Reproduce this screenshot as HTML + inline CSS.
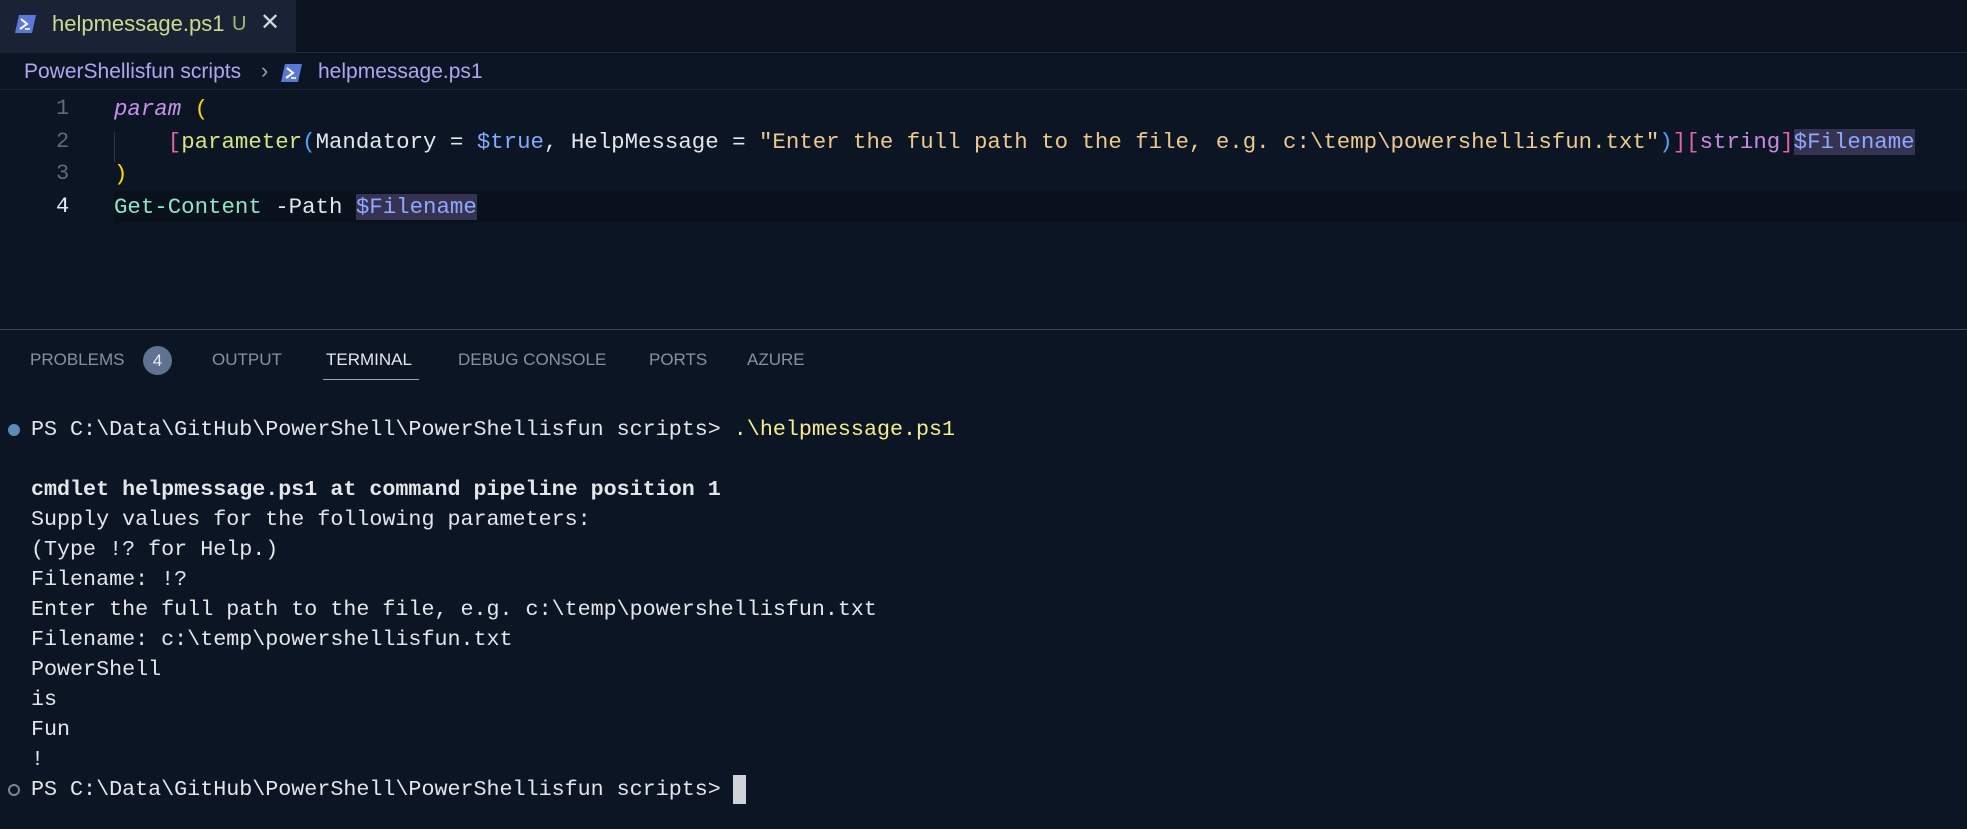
<!DOCTYPE html>
<html><head><meta charset="utf-8"><style>
*{margin:0;padding:0;box-sizing:border-box}
body{width:1967px;height:829px;background:#0c1524;overflow:hidden;position:relative;font-family:"Liberation Sans",sans-serif}
.abs{position:absolute;white-space:pre}
.tabbar{position:absolute;left:0;top:0;width:1967px;height:53px;background:#0c1421;border-bottom:1px solid #1f2a3b}
.tab{position:absolute;left:0;top:0;width:296px;height:53px;background:#1a2335}
.mono{font-family:"Liberation Mono",monospace}
.code{font-size:22.4px;line-height:32px}
.term{font-size:21.7px;line-height:30px;color:#e4e6ea}
.ln{color:#5d6b80;font-size:22px;line-height:32px;font-family:"Liberation Mono",monospace}
.sel{background:#363352}
</style></head><body>
<div class="tabbar"></div>
<div class="tab"></div>
<svg class="abs" style="left:15px;top:14px" width="22" height="20" viewBox="0 0 22 20"><path d="M4 1h17l-4 18H0z" fill="#5a78d8"/><path d="M6 5l6 5-7 5" stroke="#fff" stroke-width="2" fill="none"/><path d="M10 15h5" stroke="#fff" stroke-width="1.6"/></svg>
<div class="abs" style="left:52px;top:11px;font-size:22px;color:#cbdc8e">helpmessage.ps1</div>
<div class="abs" style="left:232px;top:13px;font-size:20px;color:#a9b774">U</div>
<div class="abs" style="left:260px;top:8px;font-size:24px;color:#d0d4dc">✕</div>
<div class="abs" style="left:24px;top:60px;font-size:21px;color:#b2a4f4">PowerShellisfun scripts</div>
<div class="abs" style="left:261px;top:58px;font-size:22px;color:#9aa3b5">›</div>
<svg class="abs" style="left:281px;top:63px" width="22" height="20" viewBox="0 0 22 20"><path d="M4 1h17l-4 18H0z" fill="#5a78d8"/><path d="M6 5l6 5-7 5" stroke="#fff" stroke-width="2" fill="none"/><path d="M10 15h5" stroke="#fff" stroke-width="1.6"/></svg>
<div class="abs" style="left:318px;top:60px;font-size:21px;color:#b2a4f4">helpmessage.ps1</div>
<div class="abs" style="left:0;top:89px;width:1967px;height:1px;background:#1a2332"></div>
<div class="abs" style="left:114px;top:191px;width:1853px;height:32px;background:#09111d"></div>
<div class="abs" style="left:114px;top:132px;width:1px;height:30px;background:#2a3548"></div>
<div class="abs ln" style="left:56px;top:93px">1</div>
<div class="abs ln" style="left:56px;top:126px">2</div>
<div class="abs ln" style="left:56px;top:158px">3</div>
<div class="abs ln" style="left:56px;top:191px;color:#e8ebf0">4</div>
<div class="abs mono code" style="left:114px;top:93px"><span style="color:#c792ea;font-style:italic">param</span> <span style="color:#ffd700">(</span></div>
<div class="abs mono code" style="left:114px;top:126px;color:#e4e6ea">    <span style="color:#e55fad">[</span><span style="color:#d6e57f">parameter</span><span style="color:#4fa3ff">(</span>Mandatory = <span style="color:#82aaff">$true</span>, HelpMessage = <span style="color:#edc98c">"Enter the full path to the file, e.g. c:\temp\powershellisfun.txt"</span><span style="color:#4fa3ff">)</span><span style="color:#e55fad">][</span><span style="color:#c98ae0">string</span><span style="color:#e55fad">]</span><span class="sel" style="color:#8da8ff">$Filename</span></div>
<div class="abs mono code" style="left:114px;top:158px;color:#ffd700">)</div>
<div class="abs mono code" style="left:114px;top:191px;color:#e4e6ea"><span style="color:#8ee6c4">Get-Content</span> -Path <span class="sel" style="color:#8da8ff">$Filename</span></div>
<div class="abs" style="left:0;top:329px;width:1967px;height:1px;background:#3a4556"></div>
<div class="abs" style="left:30px;top:350px;font-size:17px;color:#8891a0">PROBLEMS</div>
<div class="abs" style="left:143px;top:346px;width:29px;height:29px;border-radius:50%;background:#5f7290;color:#e8ecf2;font-size:17px;text-align:center;line-height:29px">4</div>
<div class="abs" style="left:212px;top:350px;font-size:17px;color:#8891a0">OUTPUT</div>
<div class="abs" style="left:326px;top:350px;font-size:17px;color:#e4e7ec">TERMINAL</div>
<div class="abs" style="left:323px;top:379px;width:96px;height:1px;background:#9aa6b8"></div>
<div class="abs" style="left:458px;top:350px;font-size:17px;color:#8891a0">DEBUG CONSOLE</div>
<div class="abs" style="left:649px;top:350px;font-size:17px;color:#8891a0">PORTS</div>
<div class="abs" style="left:747px;top:350px;font-size:17px;color:#8891a0">AZURE</div>
<div class="abs" style="left:8px;top:424px;width:12px;height:12px;border-radius:50%;background:#5b8bb8"></div>
<div class="abs" style="left:8px;top:784px;width:12px;height:12px;border-radius:50%;border:2px solid #7b8696"></div>
<div class="abs mono term" style="left:31px;top:415px">PS C:\Data\GitHub\PowerShell\PowerShellisfun scripts&gt; <span style="color:#f5ef8c">.\helpmessage.ps1</span>

<b>cmdlet helpmessage.ps1 at command pipeline position 1</b>
Supply values for the following parameters:
(Type !? for Help.)
Filename: !?
Enter the full path to the file, e.g. c:\temp\powershellisfun.txt
Filename: c:\temp\powershellisfun.txt
PowerShell
is
Fun
!
PS C:\Data\GitHub\PowerShell\PowerShellisfun scripts&gt; </div>
<div class="abs" style="left:733px;top:775px;width:13px;height:29px;background:#d0d3d8"></div>
</body></html>
